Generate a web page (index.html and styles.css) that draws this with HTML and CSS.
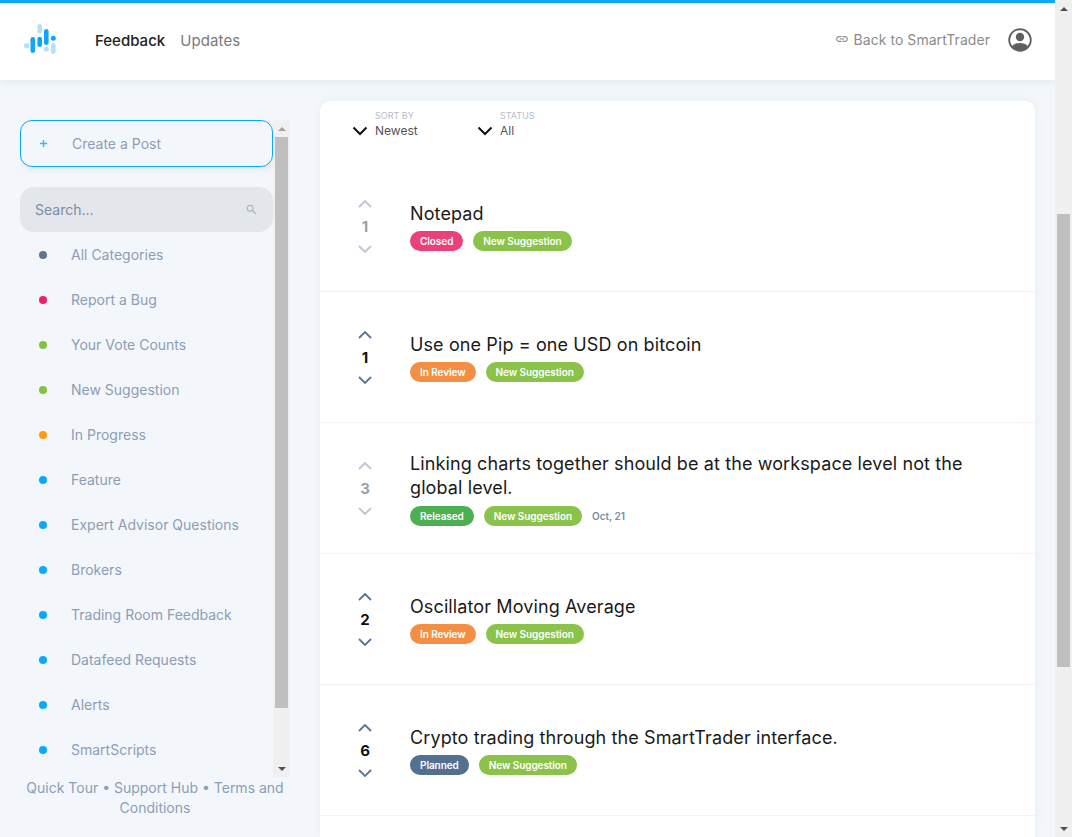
FILE: index.html
```html
<!DOCTYPE html>
<html lang="en">
<head>
<meta charset="utf-8">
<title>Feedback</title>
<link rel="stylesheet" href="styles.css">
</head>
<body>
<div class="page">
  <header class="header">
    <svg class="logo" viewBox="0 0 32 30" aria-hidden="true">
      <circle class="pale" cx="2.6" cy="21.7" r="2.6"/>
      <rect class="blue" x="6.5" y="13" width="4.6" height="16" rx="2.3"/>
      <rect class="pale" x="13.4" y="0" width="4.6" height="9.6" rx="2.3"/>
      <rect class="blue" x="13.4" y="12.7" width="4.6" height="10.4" rx="2.3"/>
      <rect class="blue" x="20" y="5" width="4.6" height="16" rx="2.3"/>
      <circle class="pale" cx="22.3" cy="25.3" r="2.5"/>
      <circle class="blue" cx="29.3" cy="14.3" r="2.5"/>
      <rect class="pale" x="27" y="19" width="4.6" height="11" rx="2.3"/>
    </svg>
    <nav class="nav">
      <a class="nav-link active">Feedback</a>
      <a class="nav-link">Updates</a>
    </nav>
    <a class="back">
      <svg class="link-icon" viewBox="0 0 24 24" aria-hidden="true"><path d="M3.9 12c0-1.71 1.39-3.1 3.1-3.1h4V7H7c-2.76 0-5 2.24-5 5s2.24 5 5 5h4v-1.9H7c-1.71 0-3.1-1.39-3.1-3.1zM8 13h8v-2H8v2zm9-6h-4v1.9h4c1.71 0 3.1 1.39 3.1 3.1s-1.39 3.1-3.1 3.1h-4V17h4c2.76 0 5-2.24 5-5s-2.24-5-5-5z"/></svg>
      Back to SmartTrader
    </a>
    <svg class="user-icon" viewBox="0 0 24 24" aria-hidden="true">
      <path d="M12 0.3A11.7 11.7 0 1 0 12 23.7A11.7 11.7 0 1 0 12 0.3ZM12 2.2A9.8 9.8 0 0 1 19.7 18C17.8 15.7 14.9 15 12 15S6.2 15.7 4.3 18A9.8 9.8 0 0 1 12 2.2Z"/>
      <circle cx="12" cy="9" r="4.2"/>
    </svg>
  </header>

  <div class="main">
    <aside class="sidebar">
      <div class="side-scroll">
        <div class="side-list">
          <button class="create">
            <svg class="plus" viewBox="0 0 10 10" aria-hidden="true"><path d="M5 1v8M1 5h8"/></svg>
            <span>Create a Post</span>
          </button>
          <div class="search">
            <span>Search...</span>
            <svg class="search-icon" viewBox="0 0 24 24" aria-hidden="true"><path d="M15.5 14h-.79l-.28-.27C15.41 12.59 16 11.11 16 9.5 16 5.91 13.09 3 9.5 3S3 5.91 3 9.5 5.91 16 9.5 16c1.61 0 3.09-.59 4.23-1.57l.27.28v.79l5 4.99L20.49 19l-4.99-5zm-6 0C7.01 14 5 11.99 5 9.5S7.01 5 9.5 5 14 7.01 14 9.5 11.99 14 9.5 14z"/></svg>
          </div>
          <ul class="cats">
            <li class="cat"><i class="dot slate"></i>All Categories</li>
            <li class="cat"><i class="dot pink"></i>Report a Bug</li>
            <li class="cat"><i class="dot green"></i>Your Vote Counts</li>
            <li class="cat"><i class="dot green"></i>New Suggestion</li>
            <li class="cat"><i class="dot orange"></i>In Progress</li>
            <li class="cat"><i class="dot sky"></i>Feature</li>
            <li class="cat"><i class="dot sky"></i>Expert Advisor Questions</li>
            <li class="cat"><i class="dot sky"></i>Brokers</li>
            <li class="cat"><i class="dot sky"></i>Trading Room Feedback</li>
            <li class="cat"><i class="dot sky"></i>Datafeed Requests</li>
            <li class="cat"><i class="dot sky"></i>Alerts</li>
            <li class="cat"><i class="dot sky"></i>SmartScripts</li>
          </ul>
        </div>
        <div class="bar side-bar">
          <span class="arrow up"></span>
          <div class="track"><div class="thumb side-thumb"></div></div>
          <span class="arrow down"></span>
        </div>
      </div>
      <p class="side-foot">Quick Tour • Support Hub • Terms and Conditions</p>
    </aside>

    <section class="card">
      <div class="filters">
        <div class="filter">
          <svg class="chev-sort" viewBox="0 0 16 10" aria-hidden="true"><path d="M1.5 1.5L8 8l6.5-6.5"/></svg>
          <div class="filter-text"><span class="filter-label">SORT BY</span><span class="filter-value">Newest</span></div>
        </div>
        <div class="filter">
          <svg class="chev-sort" viewBox="0 0 16 10" aria-hidden="true"><path d="M1.5 1.5L8 8l6.5-6.5"/></svg>
          <div class="filter-text"><span class="filter-label">STATUS</span><span class="filter-value">All</span></div>
        </div>
      </div>

      <article class="post">
        <div class="vote faded">
          <svg class="chev" viewBox="0 0 14 8" aria-hidden="true"><path d="M1 7l6-6 6 6"/></svg>
          <b class="count">1</b>
          <svg class="chev" viewBox="0 0 14 8" aria-hidden="true"><path d="M1 1l6 6 6-6"/></svg>
        </div>
        <div class="post-body">
          <h2 class="title">Notepad</h2>
          <div class="tags"><span class="tag closed">Closed</span><span class="tag new">New Suggestion</span></div>
        </div>
      </article>

      <article class="post">
        <div class="vote">
          <svg class="chev" viewBox="0 0 14 8" aria-hidden="true"><path d="M1 7l6-6 6 6"/></svg>
          <b class="count">1</b>
          <svg class="chev" viewBox="0 0 14 8" aria-hidden="true"><path d="M1 1l6 6 6-6"/></svg>
        </div>
        <div class="post-body">
          <h2 class="title">Use one Pip = one USD on bitcoin</h2>
          <div class="tags"><span class="tag review">In Review</span><span class="tag new">New Suggestion</span></div>
        </div>
      </article>

      <article class="post">
        <div class="vote faded">
          <svg class="chev" viewBox="0 0 14 8" aria-hidden="true"><path d="M1 7l6-6 6 6"/></svg>
          <b class="count">3</b>
          <svg class="chev" viewBox="0 0 14 8" aria-hidden="true"><path d="M1 1l6 6 6-6"/></svg>
        </div>
        <div class="post-body">
          <h2 class="title">Linking charts together should be at the workspace level not the global level.</h2>
          <div class="tags"><span class="tag released">Released</span><span class="tag new">New Suggestion</span><span class="date">Oct, 21</span></div>
        </div>
      </article>

      <article class="post">
        <div class="vote">
          <svg class="chev" viewBox="0 0 14 8" aria-hidden="true"><path d="M1 7l6-6 6 6"/></svg>
          <b class="count">2</b>
          <svg class="chev" viewBox="0 0 14 8" aria-hidden="true"><path d="M1 1l6 6 6-6"/></svg>
        </div>
        <div class="post-body">
          <h2 class="title">Oscillator Moving Average</h2>
          <div class="tags"><span class="tag review">In Review</span><span class="tag new">New Suggestion</span></div>
        </div>
      </article>

      <article class="post">
        <div class="vote">
          <svg class="chev" viewBox="0 0 14 8" aria-hidden="true"><path d="M1 7l6-6 6 6"/></svg>
          <b class="count">6</b>
          <svg class="chev" viewBox="0 0 14 8" aria-hidden="true"><path d="M1 1l6 6 6-6"/></svg>
        </div>
        <div class="post-body">
          <h2 class="title">Crypto trading through the SmartTrader interface.</h2>
          <div class="tags"><span class="tag planned">Planned</span><span class="tag new">New Suggestion</span></div>
        </div>
      </article>
    </section>
  </div>
</div>
<div class="bar page-bar">
  <span class="arrow up"></span>
  <div class="track"><div class="thumb page-thumb"></div></div>
  <span class="arrow down"></span>
</div>
</body>
</html>
```

FILE: styles.css
```css
* { box-sizing: border-box; }
html, body { margin: 0; padding: 0; height: 100%; overflow: hidden; }
body {
  display: flex;
  font-family: Inter, "Liberation Sans", sans-serif;
  background: #f3f7fb;
}
.page { flex: 1; min-width: 0; height: 837px; display: flex; flex-direction: column; overflow: hidden; }

/* Header */
.header {
  height: 80px;
  flex: none;
  display: flex;
  align-items: center;
  padding: 0 23px 0 24px;
  background: #fff;
  border-top: 3px solid #0aa8ff;
  box-shadow: 0 2px 8px rgba(90, 110, 140, .1);
  position: relative;
  z-index: 1;
}
.logo { width: 32px; height: 30px; margin-top: -5px; }
.blue { fill: #0fa5fb; }
.pale { fill: #b4e0fd; }
.nav { display: flex; gap: 15px; margin-left: 39px; flex: 1; margin-top: -3px; }
.nav-link { font-size: 15px; letter-spacing: .1px; color: #7b7b7b; }
.nav-link.active { color: #212121; font-weight: 500; letter-spacing: 0; }
.back { display: flex; align-items: center; gap: 5px; font-size: 14px; letter-spacing: .05px; color: #8c8c8c; margin-top: -5px; }
.link-icon { width: 14px; height: 14px; fill: #8c8c8c; }
.user-icon { width: 24px; height: 24px; fill: #5f5f5f; margin-left: 18px; margin-top: -3px; }

/* Layout */
.main { flex: 1; min-height: 0; display: flex; align-items: stretch; }

/* Sidebar */
.sidebar { width: 290px; flex: none; padding: 40px 0 0 20px; display: flex; flex-direction: column; }
.side-scroll { height: 657px; flex: none; display: flex; }
.side-list { flex: 1; min-width: 0; overflow: hidden; }
.create {
  width: 100%;
  height: 47px;
  display: flex;
  align-items: center;
  padding: 0 0 0 18px;
  border: 1px solid #0aa8ff;
  border-radius: 12px;
  background: #f3f7fb;
  box-shadow: 0 2px 6px rgba(90, 110, 140, .12);
  font: 14px Inter, "Liberation Sans", sans-serif;
  color: #8d9db5;
  text-align: left;
}
.plus { width: 9px; height: 9px; margin-right: 24px; stroke: #3db2ff; stroke-width: 1.6; fill: none; }
.search {
  height: 45px;
  margin-top: 20px;
  display: flex;
  align-items: center;
  justify-content: space-between;
  padding: 0 15px;
  background: #e3e6ea;
  border-radius: 14px;
  font-size: 14px;
  color: #7d8ca4;
}
.search-icon { width: 13px; height: 13px; fill: #a3adba; }
.cats { list-style: none; margin: 0; padding: 0; }
.cat {
  height: 45px;
  display: flex;
  align-items: center;
  padding-left: 19px;
  font-size: 14px;
  color: #8d9db5;
}
.dot { width: 8px; height: 8px; border-radius: 50%; margin-right: 24px; flex: none; }
.slate { background: #5f7391; }
.pink { background: #ef1f67; }
.green { background: #82c341; }
.orange { background: #ff9a0d; }
.sky { background: #0aa8ff; }
.side-foot {
  margin: 1px 0 0 -20px;
  padding: 0 0 0 20px;
  text-align: center;
  font-size: 14px;
  line-height: 20px;
  color: #8d9db5;
}

/* Scrollbars */
.bar { width: 17px; flex: none; display: flex; flex-direction: column; background: #f0f0f0; }
.page-bar { height: 837px; }
.track { flex: 1; min-height: 0; padding: 0 2px; }
.thumb { background: #bfbfbf; width: 100%; }
.side-thumb { height: 571px; }
.page-thumb { height: 453px; margin-top: 197px; }
.arrow { height: 17px; flex: none; display: flex; align-items: center; justify-content: center; }
.arrow::before { content: ""; border-left: 4px solid transparent; border-right: 4px solid transparent; }
.arrow.up::before { border-bottom: 4px solid #505050; }
.arrow.down::before { border-top: 4px solid #505050; }
.side-bar .arrow.up::before { border-bottom-color: #a3a3a3; }

/* Card */
.card {
  width: 715px;
  margin: 21px 0 0 30px;
  flex: none;
  background: #fff;
  border-radius: 10px 10px 0 0;
  box-shadow: 0 0 8px rgba(90, 110, 140, .08);
}
.filters { height: 60px; display: flex; padding: 9px 0 0 32px; }
.filter { width: 125px; display: flex; align-items: flex-start; gap: 7px; }
.chev-sort { width: 16px; height: 10px; margin-top: 16px; fill: none; stroke: #111; stroke-width: 2; flex: none; }
.filter-text { display: flex; flex-direction: column; }
.filter-label { font-size: 9px; line-height: 11px; color: #b4bdca; }
.filter-value { font-size: 12px; line-height: 15px; margin-top: 2px; color: #555; }

/* Posts */
.post {
  height: 131px;
  display: flex;
  align-items: center;
  padding-left: 38px;
  border-bottom: 1px solid #f1f3f6;
}
.vote { width: 14px; flex: none; display: flex; flex-direction: column; align-items: center; margin: 1px 38px 0 0; }
.vote.faded { opacity: .4; }
.chev { width: 14px; height: 8px; fill: none; stroke: #5c7394; stroke-width: 1.8; flex: none; }
.count { font-size: 15px; line-height: 18px; margin: 10px 0 9px; color: #111; font-weight: 700; }
.post-body { flex: 1; min-width: 0; padding: 1.5px 60px 0 0; }
.title { margin: 0; font-size: 18px; line-height: 24.4px; letter-spacing: .11px; font-weight: 400; color: #1a1a1a; }
.tags { display: flex; align-items: center; gap: 10px; margin-top: 5px; }
.tag {
  height: 20px;
  padding: 0 10px;
  border-radius: 10px;
  font-size: 10px;
  font-weight: 600;
  line-height: 20px;
  letter-spacing: -.07px;
  color: #fff;
}
.closed { background: #ec407a; }
.new { background: #8bc34a; }
.review { background: #f48e42; }
.released { background: #4caf50; }
.planned { background: #54708f; }
.date { font-size: 10px; font-weight: 600; color: #7d8ca4; }
```
